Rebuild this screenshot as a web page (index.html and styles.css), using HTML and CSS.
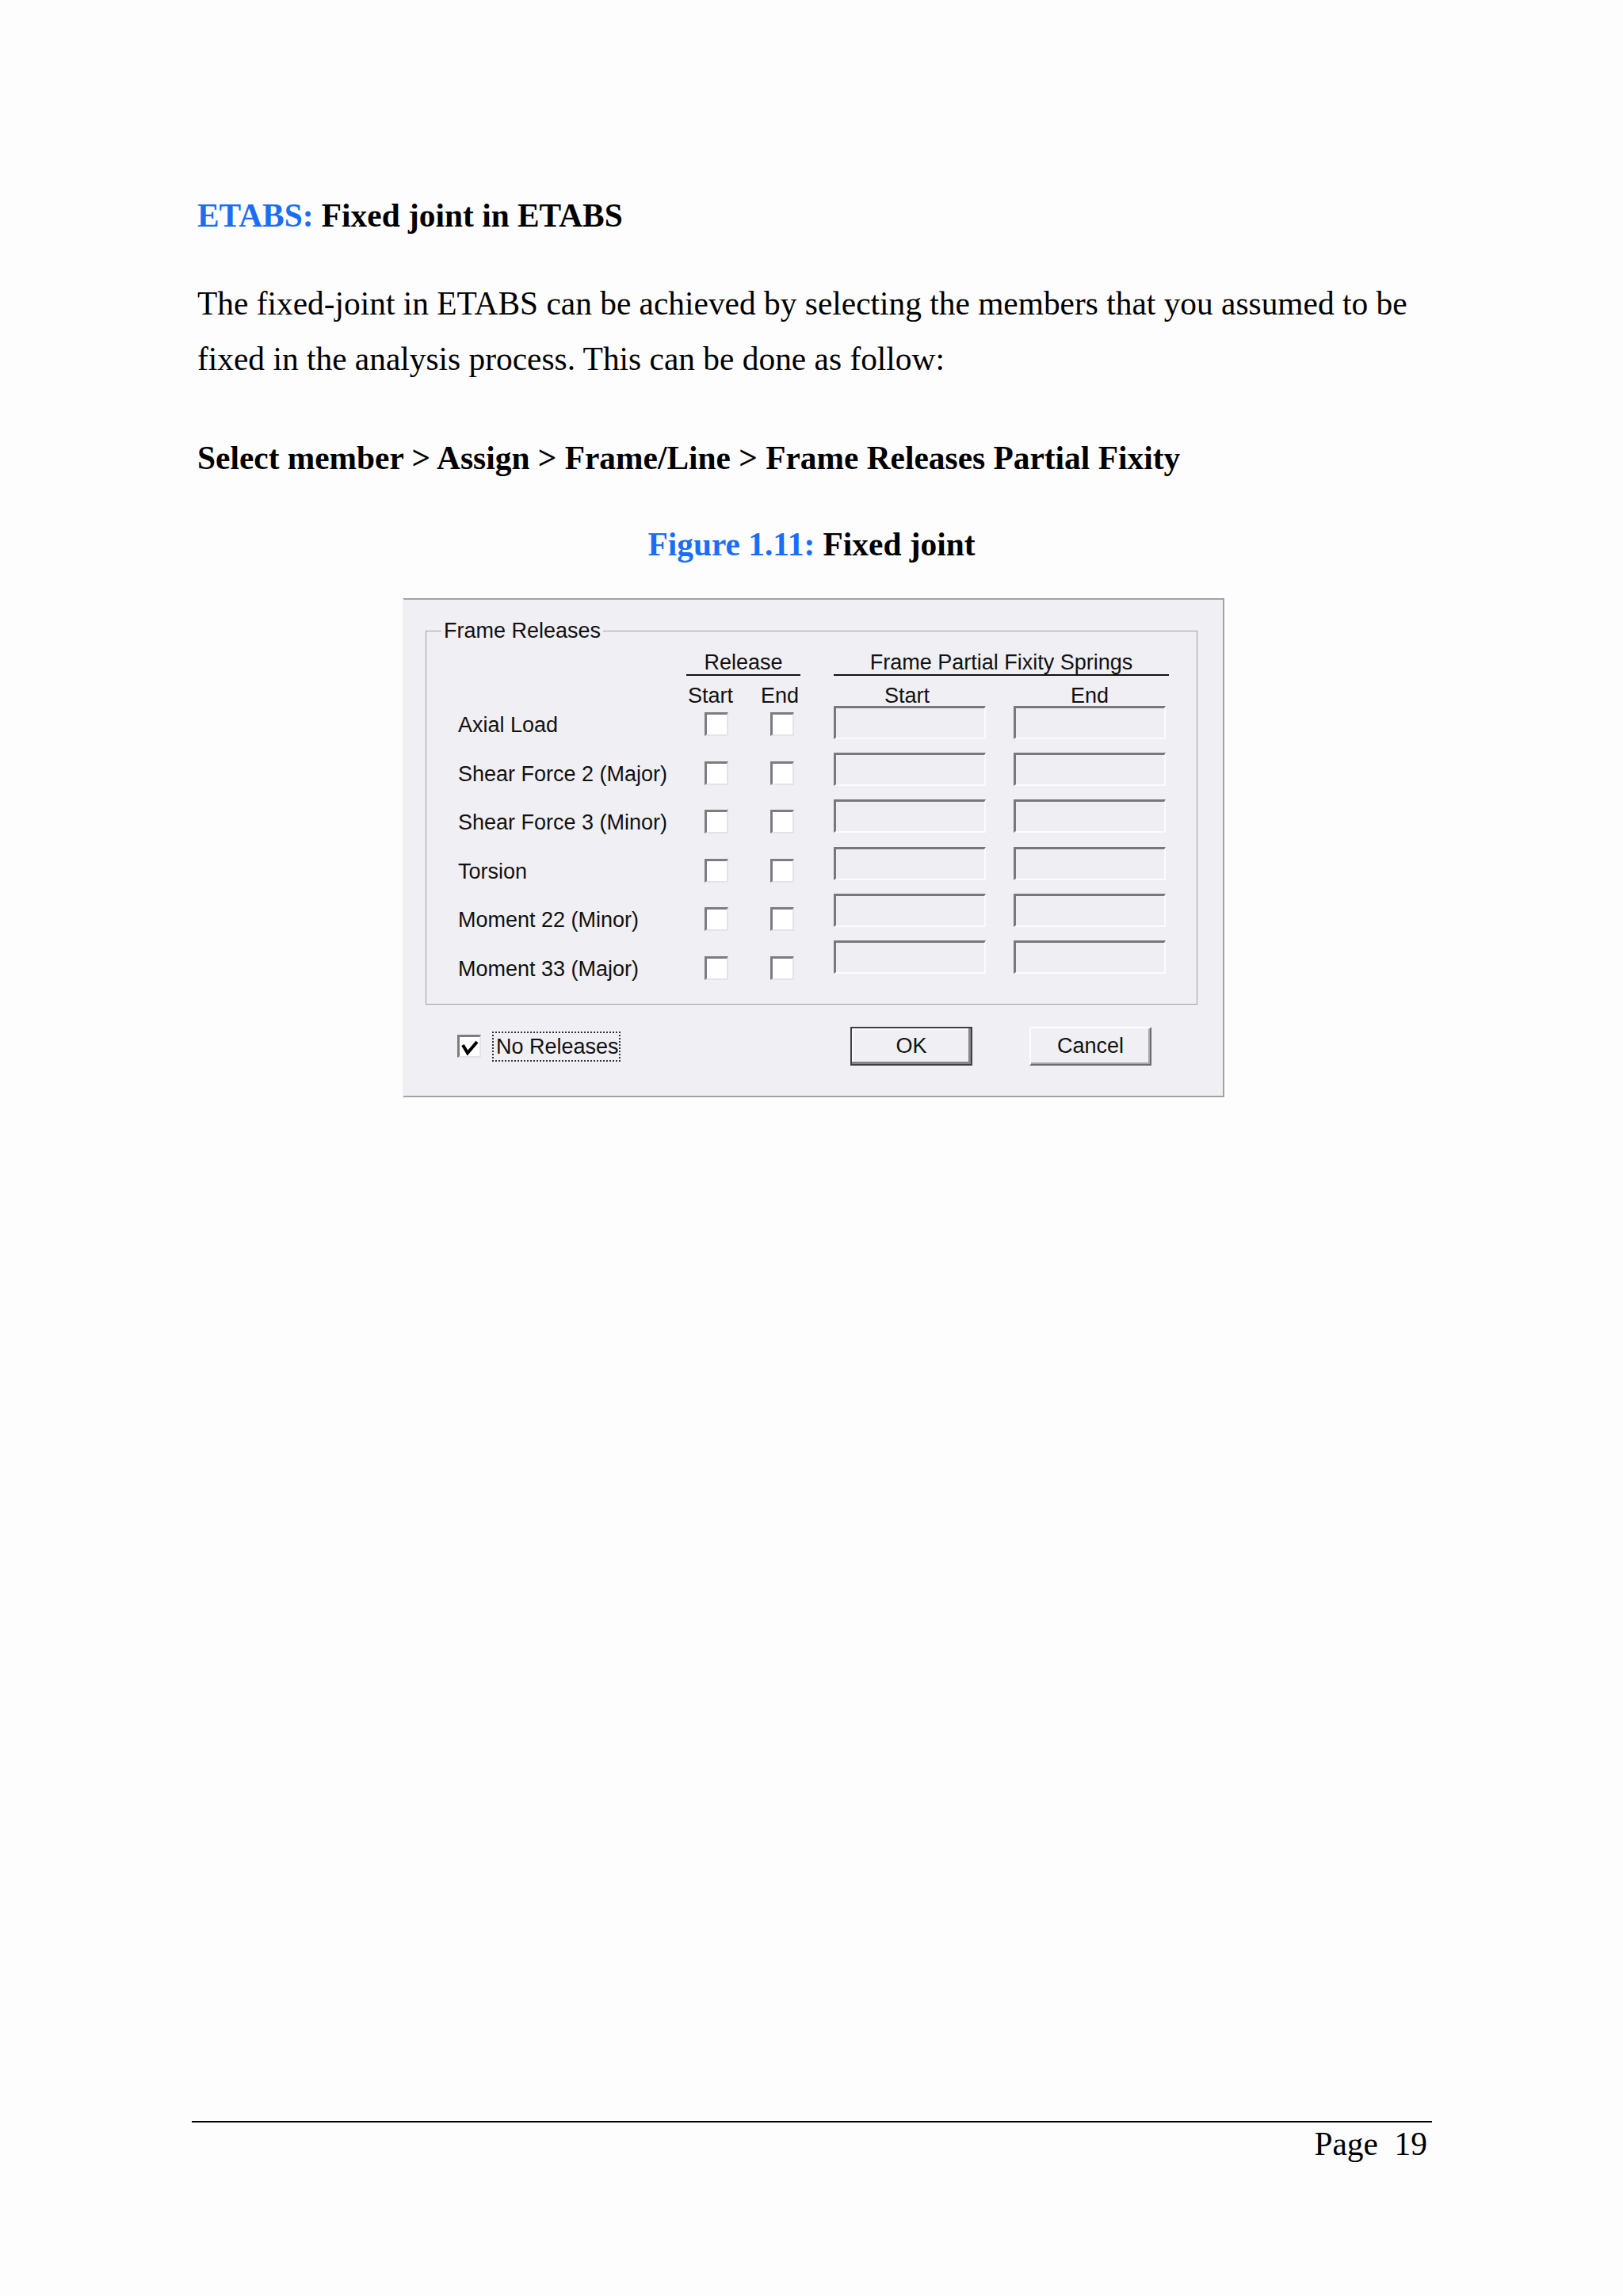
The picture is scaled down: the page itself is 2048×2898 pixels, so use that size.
FILE: index.html
```html
<!DOCTYPE html>
<html lang="en">
<head>
    <meta charset="UTF-8">
    <meta name="viewport" content="width=device-width, initial-scale=1.0">
    <title>ETABS: Fixed joint in ETABS</title>
    <link rel="stylesheet" href="styles.css">
</head>
<body>
    <div class="page">
        <h1 class="section-title"><span class="accent">ETABS:</span> Fixed joint in ETABS</h1>
        <p class="body-text">The fixed-joint in ETABS can be achieved by selecting the members that you assumed to be fixed in the analysis process. This can be done as follow:</p>
        <p class="menu-path">Select member &gt; Assign &gt; Frame/Line &gt; Frame Releases Partial Fixity</p>
        <p class="caption"><span class="accent">Figure 1.11:</span> Fixed joint</p>

        <!-- Frame Releases dialog -->
        <div class="dialog">
            <fieldset class="group">
                <legend>Frame Releases</legend>
                <div class="group-body">
                    <div class="releases">
                        <div class="col-title">Release</div>
                        <div class="rel-sub">
                            <span class="start">Start</span>
                            <span class="end">End</span>
                        </div>
                        <div class="rel-rows">
                            <span class="label">Axial Load</span>
                            <span class="check start-box"></span>
                            <span class="check end-box"></span>

                            <span class="label">Shear Force 2 (Major)</span>
                            <span class="check start-box"></span>
                            <span class="check end-box"></span>

                            <span class="label">Shear Force 3 (Minor)</span>
                            <span class="check start-box"></span>
                            <span class="check end-box"></span>

                            <span class="label">Torsion</span>
                            <span class="check start-box"></span>
                            <span class="check end-box"></span>

                            <span class="label">Moment 22 (Minor)</span>
                            <span class="check start-box"></span>
                            <span class="check end-box"></span>

                            <span class="label">Moment 33 (Major)</span>
                            <span class="check start-box"></span>
                            <span class="check end-box"></span>
                        </div>
                    </div>

                    <div class="springs">
                        <div class="col-title">Frame Partial Fixity Springs</div>
                        <div class="spr-sub">
                            <span class="start">Start</span>
                            <span class="end">End</span>
                        </div>
                        <div class="spr-fields">
                            <input class="field" type="text">
                            <input class="field" type="text">
                            <input class="field" type="text">
                            <input class="field" type="text">
                            <input class="field" type="text">
                            <input class="field" type="text">
                            <input class="field" type="text">
                            <input class="field" type="text">
                            <input class="field" type="text">
                            <input class="field" type="text">
                            <input class="field" type="text">
                            <input class="field" type="text">
                        </div>
                    </div>
                </div>
            </fieldset>

            <div class="dialog-footer">
                <span class="check checked">
                    <svg width="24" height="24" viewBox="0 0 24 24">
                        <polyline points="4,10 10,20 22,6" fill="none" stroke="#000" stroke-width="4"/>
                    </svg>
                </span>
                <span class="focus-label">No Releases</span>
                <button class="btn btn-default">OK</button>
                <button class="btn">Cancel</button>
            </div>
        </div>

        <div class="page-footer">Page&nbsp; 19</div>
    </div>
</body>
</html>
```

FILE: styles.css
```css
body {
    margin: 0;
    background-color: #fefdfe;
    font-family: "Liberation Serif", "Times New Roman", serif;
    color: #000;
}
.page {
    min-height: 2898px;
    box-sizing: border-box;
    padding: 242px 249px 169px;
    display: flex;
    flex-direction: column;
}
.section-title {
    margin: 0;
    font-size: 41.4px;
    line-height: 61.5px;
    font-weight: bold;
}
.accent {
    color: #1b6ef3;
}
.body-text {
    margin: 44.5px 0 0;
    font-size: 41.4px;
    line-height: 70px;
}
.menu-path {
    margin: 59.5px 0 0;
    font-size: 41.4px;
    line-height: 61.5px;
    font-weight: bold;
}
.caption {
    margin: 47.5px 0 0;
    font-size: 41.4px;
    line-height: 61.5px;
    font-weight: bold;
    text-align: center;
}

/* dialog */
.dialog {
    width: 1037px;
    box-sizing: border-box;
    margin: 37px 0 0 259px;
    padding: 24px 32px 0 27px;
    background-color: #f0eff3;
    border: 2px solid #a2a1a5;
    border-left-color: #f0eff3;
    font-family: "Liberation Sans", Arial, sans-serif;
    font-size: 27px;
    color: #111;
}
.group {
    width: 974px;
    box-sizing: border-box;
    margin: 0;
    padding: 11px 0 27px 19px;
    border: 1px solid #9f9ea3;
    min-inline-size: 0;
}
.group legend {
    padding: 0 3px;
    line-height: 30px;
}
.group-body {
    display: flex;
    gap: 42px;
    margin-left: 20px;
}
.releases {
    width: 433px;
}
.springs {
    width: 423px;
}
.col-title {
    line-height: 29px;
    text-align: center;
    white-space: nowrap;
    border-bottom: 2px solid #111;
}
.releases .col-title {
    margin-left: 289px;
}
.rel-sub,
.rel-rows {
    display: grid;
    grid-template-columns: 289px 78px 66px;
}
.rel-sub {
    margin-top: 9.5px;
    line-height: 30px;
}
.rel-sub .start {
    grid-column: 2;
    padding-left: 2px;
}
.rel-sub .end {
    grid-column: 3;
    padding-left: 16px;
}
.rel-rows {
    margin-top: 6.5px;
    grid-auto-rows: 33px;
    row-gap: 28.5px;
}
.rel-rows .label {
    line-height: 33px;
    padding-left: 1px;
    white-space: nowrap;
}
.rel-rows .start-box {
    margin-left: 23px;
}
.rel-rows .end-box {
    margin-left: 28px;
}
.check {
    display: block;
    width: 30px;
    height: 30px;
    box-sizing: border-box;
    background-color: #fff;
    border-style: solid;
    border-width: 3px 2px 2px 3px;
    border-color: #7d7c80 #e4e3e6 #e4e3e6 #7d7c80;
}
.spr-sub,
.spr-fields {
    display: grid;
    grid-template-columns: 192px 192px;
    column-gap: 35px;
}
.spr-sub {
    margin-top: 11.5px;
    line-height: 26px;
}
.spr-sub .start {
    padding-left: 64px;
}
.spr-sub .end {
    text-align: center;
}
.spr-fields {
    grid-auto-rows: 42px;
    row-gap: 17.4px;
}
.field {
    width: 192px;
    height: 42px;
    box-sizing: border-box;
    margin: 0;
    padding: 0;
    background-color: #efeef2;
    border-style: solid;
    border-width: 3px 2px 2px 3px;
    border-color: #78777b #fbfbfc #fbfbfc #78777b;
    outline: none;
}

.dialog-footer {
    display: flex;
    align-items: center;
    margin-top: 28.5px;
    padding: 0 58px 38px 40px;
}
.dialog-footer .check {
    height: 29px;
    margin-right: 14px;
}
.check svg {
    display: block;
}
.focus-label {
    width: 162px;
    box-sizing: border-box;
    padding-left: 3px;
    line-height: 34px;
    border: 2px dotted #333;
    white-space: nowrap;
}
.btn {
    width: 154px;
    height: 49px;
    box-sizing: border-box;
    padding: 0;
    font: inherit;
    color: #111;
    background-color: #f0eff3;
    border-style: solid;
    border-width: 2px;
    border-color: #fcfcfc #6c6b70 #6c6b70 #fcfcfc;
    box-shadow: inset -2px -2px 0 #a8a7ab;
}
.btn-default {
    margin-left: auto;
    border-color: #3f3e42;
    box-shadow: inset -3px -3px 0 #86858a, inset 2px 2px 0 #fcfcfc;
}
.btn + .btn {
    margin-left: 72px;
}

.page-footer {
    margin: auto -8px 0 -7px;
    padding: 4px 6px 0 0;
    border-top: 2px solid #000;
    text-align: right;
    font-size: 41.4px;
    line-height: 46px;
}
```
